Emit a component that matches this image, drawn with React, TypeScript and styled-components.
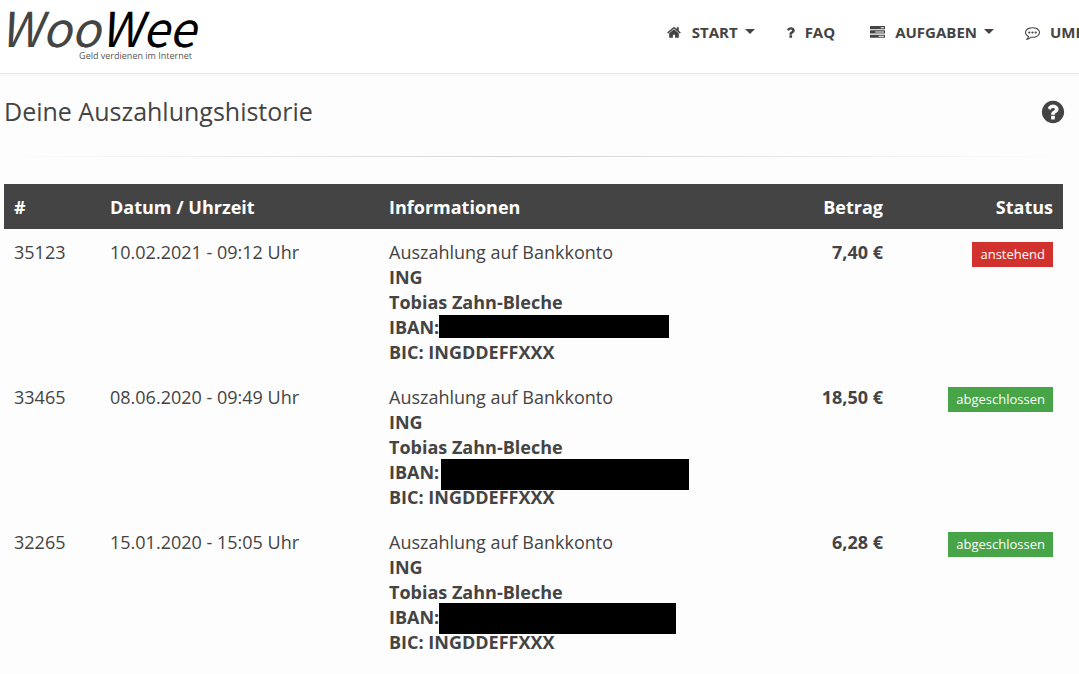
import React from "react";
import styled, { createGlobalStyle } from "styled-components";

const GlobalStyle = createGlobalStyle`
  *, *::before, *::after { box-sizing: border-box; }
  body {
    margin: 0;
    overflow-x: hidden;
    background: #fdfdfd;
    color: #444;
    font-family: "Open Sans", "Liberation Sans", sans-serif;
    font-size: 18px;
    line-height: 25px;
  }
`;

const Header = styled.header`
  display: flex;
  align-items: flex-start;
  height: 73px;
  overflow: hidden;
  background: #fff;
`;

const HeaderShadow = styled.div`
  height: 4px;
  border-top: 1px solid #e6e6e6;
  background: linear-gradient(#f6f6f6, #fdfdfd);
`;

const Logo = styled.a`
  display: flex;
  flex: 0 0 192px;
  flex-direction: column;
  min-width: 0;
  color: #444;
  text-decoration: none;
  white-space: nowrap;
`;

const Wordmark = styled.span`
  height: 50px;
  font-family: "Noto Sans CJK SC", "Liberation Sans", sans-serif;
  font-size: 48px;
  font-style: italic;
  line-height: 52px;
`;

const WordmarkAccent = styled.span`
  color: #000;
`;

const Tagline = styled.span`
  align-self: flex-end;
  font-size: 9px;
  line-height: 12px;
  color: #555;
`;

const Nav = styled.nav`
  flex: 1 0 auto;
  margin-left: 44%;
  padding-top: 20px;
`;

const NavList = styled.ul`
  display: flex;
  gap: 35px;
  margin: 0;
  padding: 0;
  list-style: none;
`;

const NavLink = styled.a`
  display: flex;
  align-items: center;
  color: #444;
  font-size: 15px;
  font-weight: 700;
  line-height: 25px;
  text-decoration: none;
  white-space: nowrap;
`;

const Icon = styled.svg<{ $width: number; $height: number }>`
  display: block;
  width: ${(p) => p.$width}px;
  height: ${(p) => p.$height}px;
  fill: currentColor;
`;

const NavLabel = styled.span`
  margin-left: 10px;
`;

const Caret = styled.span`
  margin: 0 -4px 3px 7px;
  border: 5px solid transparent;
  border-top-color: currentColor;
  border-bottom: 0;
`;

const Main = styled.main`
  padding: 22px 16px 22px 4px;
`;

const TitleBar = styled.div`
  display: flex;
  align-items: center;
  justify-content: space-between;
  height: 26px;
`;

const Title = styled.h1`
  margin: 0;
  padding-bottom: 2px;
  font-size: 25px;
  font-weight: 400;
  line-height: 26px;
`;

const HelpButton = styled.button`
  display: block;
  margin-right: -3px;
  padding: 0;
  border: 0;
  background: none;
  color: #444;
`;

const Divider = styled.hr`
  height: 1px;
  margin: 31px 0 27px;
  border: 0;
  background: linear-gradient(to right, transparent, #d4d4d4, transparent);
`;

const Table = styled.table`
  width: 100%;
  table-layout: fixed;
  border-collapse: collapse;
`;

const Column = styled.col<{ $width?: number }>`
  width: ${(p) => (p.$width ? `${p.$width}px` : "auto")};
`;

const HeadCell = styled.th<{ $right?: boolean }>`
  padding: 11px 10px 9px;
  background: #444;
  color: #fff;
  font-weight: 700;
  text-align: ${(p) => (p.$right ? "right" : "left")};
`;

const Cell = styled.td<{ $right?: boolean; $bold?: boolean }>`
  padding: 11px 10px 9px;
  font-weight: ${(p) => (p.$bold ? 700 : 400)};
  text-align: ${(p) => (p.$right ? "right" : "left")};
  vertical-align: top;
`;

const StatusCell = styled(Cell)`
  padding-top: 13px;
`;

const Badge = styled.span<{ $done: boolean }>`
  display: inline-block;
  padding: 0 8px;
  background: ${(p) => (p.$done ? "#47a447" : "#d2322d")};
  color: #fff;
  font-size: 13px;
  line-height: 25px;
  vertical-align: top;
`;

const Line = styled.div`
  position: relative;
  font-weight: 700;
`;

const Redaction = styled.span<{ $left: number; $top: number; $width: number; $height: number }>`
  position: absolute;
  top: ${(p) => p.$top}px;
  left: ${(p) => p.$left}px;
  width: ${(p) => p.$width}px;
  height: ${(p) => p.$height}px;
  background: #000;
`;

const paths = {
  home: "M1408 992v480q0 26-19 45t-45 19h-384v-384h-256v384h-384q-26 0-45-19t-19-45v-480q0-1 .5-3t.5-3l575-474 575 474q1 2 1 6zm223-69l-62 74q-8 9-21 11h-3q-13 0-21-7l-692-577-692 577q-12 8-24 7-13-2-21-11l-62-74q-8-10-7-23.5t11-21.5l719-599q32-26 76-26t76 26l244 204v-195q0-14 9-23t23-9h192q14 0 23 9t9 23v408l219 182q10 8 11 21.5t-7 23.5z",
  question: "M1088 1256v240q0 16-12 28t-28 12h-240q-16 0-28-12t-12-28v-240q0-16 12-28t28-12h240q16 0 28 12t12 28zm316-600q0 54-15.5 101t-35 76.5-55 59.5-57.5 43.5-61 35.5q-41 23-68.5 65t-27.5 67q0 17-12 32.5t-28 15.5h-240q-15 0-25.5-18.5t-10.5-37.5v-45q0-83 65-156.5t143-108.5q59-27 84-56t25-76q0-42-46.5-74t-107.5-32q-65 0-108 29-35 25-107 115-13 16-31 16-12 0-25-8l-164-125q-13-10-15.5-25t5.5-28q160-266 464-266 80 0 161 31t146 83 106 127.5 41 158.5z",
  tasks: "M1024 1408h640v-128h-640v128zm-384-512h1024v-128h-1024v128zm640-512h384v-128h-384v128zm512 832v256q0 26-19 45t-45 19h-1664q-26 0-45-19t-19-45v-256q0-26 19-45t45-19h1664q26 0 45 19t19 45zm0-512v256q0 26-19 45t-45 19h-1664q-26 0-45-19t-19-45v-256q0-26 19-45t45-19h1664q26 0 45 19t19 45zm0-512v256q0 26-19 45t-45 19h-1664q-26 0-45-19t-19-45v-256q0-26 19-45t45-19h1664q26 0 45 19t19 45z",
  comment: "M640 896q0 53-37.5 90.5t-90.5 37.5-90.5-37.5-37.5-90.5 37.5-90.5 90.5-37.5 90.5 37.5 37.5 90.5zm384 0q0 53-37.5 90.5t-90.5 37.5-90.5-37.5-37.5-90.5 37.5-90.5 90.5-37.5 90.5 37.5 37.5 90.5zm384 0q0 53-37.5 90.5t-90.5 37.5-90.5-37.5-37.5-90.5 37.5-90.5 90.5-37.5 90.5 37.5 37.5 90.5zm-512-512q-204 0-381.5 69.5t-282 187.5-104.5 255q0 112 71.5 213.5t201.5 175.5l87 50-27 96q-24 91-70 172 152-63 275-171l43-38 57 6q69 8 130 8 204 0 381.5-69.5t282-187.5 104.5-255-104.5-255-282-187.5-381.5-69.5zm896 512q0 174-120 321.5t-326 233-450 85.5q-70 0-145-8-198 175-460 242-49 14-114 22h-5q-15 0-27-10.5t-16-27.5v-1q-3-4-.5-12t2-10 4.5-9.5l6-9 7-8.5 8-9q7-8 31-34.5t34.5-38 31-39.5 32.5-51 27-59 26-76q-157-89-247.5-220t-90.5-281q0-174 120-321.5t326-233 450-85.5 450 85.5 326 233 120 321.5z",
  help: "M1024 1376v-192q0-14-9-23t-23-9h-192q-14 0-23 9t-9 23v192q0 14 9 23t23 9h192q14 0 23-9t9-23zm256-672q0-88-55.5-163t-138.5-116-170-41q-243 0-371 213-15 24 8 42l132 100q7 6 19 6 16 0 25-12 53-68 86-92 34-24 86-24 48 0 85.5 26t37.5 59q0 38-20 61t-68 45q-63 28-115.5 86.5t-52.5 125.5v36q0 14 9 23t23 9h192q14 0 23-9t9-23q0-19 21.5-49.5t54.5-49.5q32-18 49-28.5t46-35 44.5-48 28-60.5 12.5-81zm384 192q0 209-103 385.5t-279.5 279.5-385.5 103-385.5-103-279.5-279.5-103-385.5 103-385.5 279.5-279.5 385.5-103 385.5 103 279.5 279.5 103 385.5z",
};

type Glyph = keyof typeof paths;

function GlyphIcon({ name, size }: { name: Glyph; size: number }) {
  const narrow = name === "question";
  return (
    <Icon
      $width={narrow ? Math.round(size * 0.6) : size}
      $height={size}
      viewBox={narrow ? "368 0 1056 1792" : "0 0 1792 1792"}
      aria-hidden="true"
    >
      <path d={paths[name]} />
    </Icon>
  );
}

const navItems: { icon: Glyph; label: string; menu?: boolean }[] = [
  { icon: "home", label: "START", menu: true },
  { icon: "question", label: "FAQ" },
  { icon: "tasks", label: "AUFGABEN", menu: true },
  { icon: "comment", label: "UMFRAGEN" },
];

const payouts = [
  { id: "35123", date: "10.02.2021 - 09:12 Uhr", amount: "7,40 €", done: false, bar: { left: 50, top: 0, width: 230, height: 23 } },
  { id: "33465", date: "08.06.2020 - 09:49 Uhr", amount: "18,50 €", done: true, bar: { left: 52, top: -1, width: 248, height: 31 } },
  { id: "32265", date: "15.01.2020 - 15:05 Uhr", amount: "6,28 €", done: true, bar: { left: 50, top: -2, width: 237, height: 31 } },
];

export default function App() {
  return (
    <>
      <GlobalStyle />
      <Header>
        <Logo href="#">
          <Wordmark>
            Woo<WordmarkAccent>Wee</WordmarkAccent>
          </Wordmark>
          <Tagline>Geld verdienen im Internet</Tagline>
        </Logo>
        <Nav>
          <NavList>
            {navItems.map((item) => (
              <li key={item.label}>
                <NavLink href="#">
                  <GlyphIcon name={item.icon} size={15} />
                  <NavLabel>{item.label}</NavLabel>
                  {item.menu && <Caret />}
                </NavLink>
              </li>
            ))}
          </NavList>
        </Nav>
      </Header>
      <HeaderShadow />
      <Main>
        <TitleBar>
          <Title>Deine Auszahlungshistorie</Title>
          <HelpButton type="button" aria-label="Hilfe">
            <GlyphIcon name="help" size={26} />
          </HelpButton>
        </TitleBar>
        <Divider />
        <Table>
          <colgroup>
            <Column $width={96} />
            <Column $width={279} />
            <Column />
            <Column $width={150} />
            <Column $width={170} />
          </colgroup>
          <thead>
            <tr>
              <HeadCell>#</HeadCell>
              <HeadCell>Datum / Uhrzeit</HeadCell>
              <HeadCell>Informationen</HeadCell>
              <HeadCell $right>Betrag</HeadCell>
              <HeadCell $right>Status</HeadCell>
            </tr>
          </thead>
          <tbody>
            {payouts.map((p) => (
              <tr key={p.id}>
                <Cell>{p.id}</Cell>
                <Cell>{p.date}</Cell>
                <Cell>
                  Auszahlung auf Bankkonto
                  <Line>ING</Line>
                  <Line>Tobias Zahn-Bleche</Line>
                  <Line>
                    IBAN:
                    <Redaction $left={p.bar.left} $top={p.bar.top} $width={p.bar.width} $height={p.bar.height} />
                  </Line>
                  <Line>BIC: INGDDEFFXXX</Line>
                </Cell>
                <Cell $right $bold>{p.amount}</Cell>
                <StatusCell $right>
                  <Badge $done={p.done}>{p.done ? "abgeschlossen" : "anstehend"}</Badge>
                </StatusCell>
              </tr>
            ))}
          </tbody>
        </Table>
      </Main>
    </>
  );
}
